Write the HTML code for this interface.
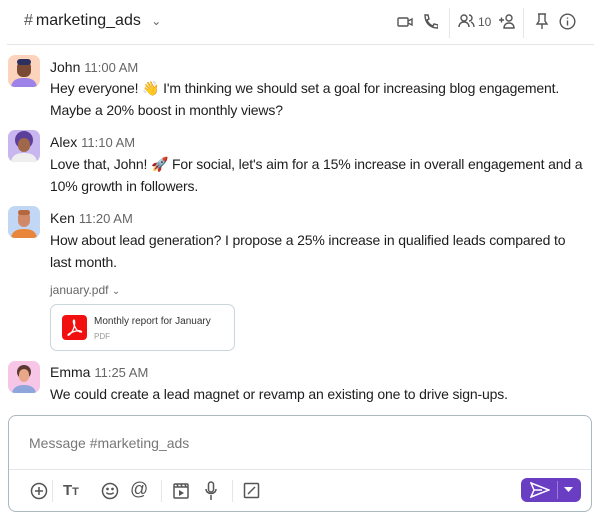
<!DOCTYPE html>
<html><head><meta charset="utf-8"><style>
*{margin:0;padding:0;box-sizing:border-box}
body{width:600px;height:519px;background:#fff;font-family:"Liberation Sans",sans-serif;color:#1d1d1f;position:relative;overflow:hidden}
.abs{position:absolute}
.title{left:24px;top:12px;font-size:16px;color:#222}
.title .h{color:#555;margin-right:3px}
.hr{left:7px;top:44px;width:587px;height:1px;background:#e6e6e6}
.av{position:absolute;left:8px;width:32px;height:32px;border-radius:7px;overflow:hidden}
.name{position:absolute;left:50px;font-size:14px;color:#1d1d1f}
.name span{font-size:13px;color:#666}
.txt{position:absolute;left:50px;font-size:14px;line-height:22px;color:#1d1d1f;width:538px;letter-spacing:-0.15px}
svg{position:absolute}
</style></head><body>
<div class="abs title"><span class="h">#</span>marketing_ads <span style="color:#666;font-size:12px;margin-left:6px">&#8964;</span></div>
<svg style="left:397px;top:15px" width="16" height="14" viewBox="0 0 16 14" fill="none" stroke="#555" stroke-width="1.4"><rect x="1" y="3" width="10" height="8" rx="1"/><path d="M11 6l4-2v6l-4-2"/></svg>
<svg style="left:422px;top:13px" width="16" height="17" viewBox="0 0 16 17" fill="none" stroke="#555" stroke-width="1.4"><path d="M3 2l3 0 1 4-2 1c1 3 3 5 6 6l1-2 4 1v3c-8 0-13-5-13-13z"/></svg>
<div class="abs" style="left:449px;top:8px;width:1px;height:30px;background:#e6e6e6"></div>
<svg style="left:458px;top:14px" width="18" height="14" viewBox="0 0 18 14" fill="none" stroke="#555" stroke-width="1.4"><circle cx="6" cy="4" r="3"/><path d="M1 13c0-3 2-5 5-5s5 2 5 5M11 1a3 3 0 010 6M13 8c2 1 3 3 3 5"/></svg>
<div class="abs" style="left:478px;top:15px;font-size:12px;color:#555">10</div>
<svg style="left:498px;top:13px" width="18" height="16" viewBox="0 0 18 16" fill="none" stroke="#555" stroke-width="1.4"><path d="M1 7h5M3.5 4.5v5"/><circle cx="11" cy="5" r="3"/><path d="M6 15c0-3 2-5 5-5s5 2 5 5z"/></svg>
<div class="abs" style="left:523px;top:8px;width:1px;height:30px;background:#e6e6e6"></div>
<svg style="left:535px;top:13px" width="14" height="17" viewBox="0 0 14 17" fill="none" stroke="#555" stroke-width="1.4"><path d="M3 1h8M4 1v7l-2 3h10l-2-3V1M7 11v5"/></svg>
<svg style="left:559px;top:13px" width="17" height="17" viewBox="0 0 17 17" fill="none" stroke="#555" stroke-width="1.4"><circle cx="8.5" cy="8.5" r="7.3"/><path d="M8.5 7.5v5M8.5 4.5v1.3"/></svg>
<div class="abs hr"></div>

<div class="av" style="top:55px;background:#fcd4bd"><svg width="32" height="32"><rect x="9" y="6" width="14" height="16" rx="6" fill="#7a4a35"/><rect x="9" y="4" width="14" height="6" rx="3" fill="#2d2f5e"/><path d="M3 32c1-7 6-9 13-9s12 2 13 9z" fill="#9d83e8"/></svg></div>
<div class="name" style="top:59px">John <span>11:00 AM</span></div>
<div class="txt" style="top:77px">Hey everyone! 👋 I'm thinking we should set a goal for increasing blog engagement. Maybe a 20% boost in monthly views?</div>

<div class="av" style="top:130px;background:#c8b6ef"><svg width="32" height="32"><circle cx="16" cy="10" r="9" fill="#5b3f9a"/><rect x="10" y="8" width="12" height="14" rx="6" fill="#a0684a"/><path d="M3 32c1-7 6-9 13-9s12 2 13 9z" fill="#eee"/></svg></div>
<div class="name" style="top:134px">Alex <span>11:10 AM</span></div>
<div class="txt" style="top:153px">Love that, John! 🚀 For social, let's aim for a 15% increase in overall engagement and a 10% growth in followers.</div>

<div class="av" style="top:206px;background:#c2d7f6"><svg width="32" height="32"><rect x="10" y="5" width="12" height="16" rx="6" fill="#d08a6a"/><rect x="10" y="4" width="12" height="5" rx="2.5" fill="#b5673e"/><path d="M3 32c1-7 6-9 13-9s12 2 13 9z" fill="#e8873c"/></svg></div>
<div class="name" style="top:210px">Ken <span>11:20 AM</span></div>
<div class="txt" style="top:229px">How about lead generation? I propose a 25% increase in qualified leads compared to last month.</div>
<div class="abs" style="left:50px;top:283px;font-size:12px;color:#666">january.pdf <span style="font-size:10px">&#8964;</span></div>
<div class="abs" style="left:50px;top:304px;width:185px;height:47px;border:1px solid #c9d6dc;border-radius:7px"></div>
<div class="abs" style="left:62px;top:315px;width:25px;height:25px;border-radius:4px;background:#f20f0f"><svg width="25" height="25" viewBox="0 0 25 25" fill="none" stroke="#fff" stroke-width="1.3"><path d="M12 5c-1 0-1 3 1 7s4 5 6 5-1-2-5-1-8 3-8 4 3-1 5-5 2-10 1-10z"/></svg></div>
<div class="abs" style="left:94px;top:316px;font-size:10px;color:#333">Monthly report for January</div>
<div class="abs" style="left:94px;top:332px;font-size:8px;color:#999">PDF</div>

<div class="av" style="top:361px;background:#f7c6e6"><svg width="32" height="32"><circle cx="16" cy="11" r="7" fill="#5a3a32"/><rect x="11" y="8" width="10" height="13" rx="5" fill="#e8a888"/><path d="M4 32c1-6 6-8 12-8s11 2 12 8z" fill="#8fa6dc"/></svg></div>
<div class="name" style="top:364px">Emma <span>11:25 AM</span></div>
<div class="txt" style="top:383px">We could create a lead magnet or revamp an existing one to drive sign-ups.</div>

<div class="abs" style="left:8px;top:415px;width:584px;height:97px;border:1px solid #aab8bf;border-radius:8px"></div>
<div class="abs" style="left:29px;top:435px;font-size:14px;color:#777">Message #marketing_ads</div>
<div class="abs" style="left:9px;top:469px;width:582px;height:1px;background:#e3e6e8"></div>
<svg style="left:30px;top:482px" width="18" height="18" viewBox="0 0 18 18" fill="none" stroke="#555" stroke-width="1.5"><circle cx="9" cy="9" r="7.5"/><path d="M9 5v8M5 9h8"/></svg>
<div class="abs" style="left:52px;top:480px;width:1px;height:22px;background:#e6e6e6"></div>
<div class="abs" style="left:63px;top:482px;font-size:15px;font-weight:bold;color:#555">T<span style="font-size:11px">T</span></div>
<svg style="left:101px;top:482px" width="18" height="18" viewBox="0 0 18 18" fill="none" stroke="#555" stroke-width="1.5"><circle cx="9" cy="9" r="7.5"/><path d="M5.5 10.5c1 2 6 2 7 0"/><circle cx="6.5" cy="7" r=".6" fill="#555"/><circle cx="11.5" cy="7" r=".6" fill="#555"/></svg>
<div class="abs" style="left:130px;top:479px;font-size:18px;color:#555">@</div>
<div class="abs" style="left:161px;top:480px;width:1px;height:22px;background:#e6e6e6"></div>
<svg style="left:172px;top:482px" width="18" height="18" viewBox="0 0 18 18" fill="none" stroke="#555" stroke-width="1.5"><rect x="2" y="2" width="14" height="14" rx="1"/><path d="M2 5h14M5 2l1 3M9 2l1 3M13 2l1 3"/><path d="M7 8v6l5-3z" fill="#555" stroke="none"/></svg>
<svg style="left:204px;top:481px" width="14" height="20" viewBox="0 0 14 20" fill="none" stroke="#555" stroke-width="1.5"><rect x="4.5" y="1" width="5" height="10" rx="2.5"/><path d="M2 8c0 6 10 6 10 0M7 14v5"/></svg>
<div class="abs" style="left:232px;top:480px;width:1px;height:22px;background:#e6e6e6"></div>
<svg style="left:243px;top:482px" width="17" height="17" viewBox="0 0 17 17" fill="none" stroke="#555" stroke-width="1.5"><rect x="1.5" y="1.5" width="14" height="14" rx="1"/><path d="M5 12l7-7"/></svg>
<div class="abs" style="left:521px;top:478px;width:60px;height:24px;border-radius:6px;background:#6a3ec2"></div>
<div class="abs" style="left:557px;top:481px;width:1px;height:18px;background:#9b7ad8"></div>
<svg style="left:530px;top:482px" width="20" height="16" viewBox="0 0 20 16" fill="none" stroke="#fff" stroke-width="1.5"><path d="M1 1l18 7-18 7 3-7z M4 8h8"/></svg>
<svg style="left:564px;top:487px" width="9" height="5"><path d="M0 0h9l-4.5 5z" fill="#fff"/></svg>
</body></html>
